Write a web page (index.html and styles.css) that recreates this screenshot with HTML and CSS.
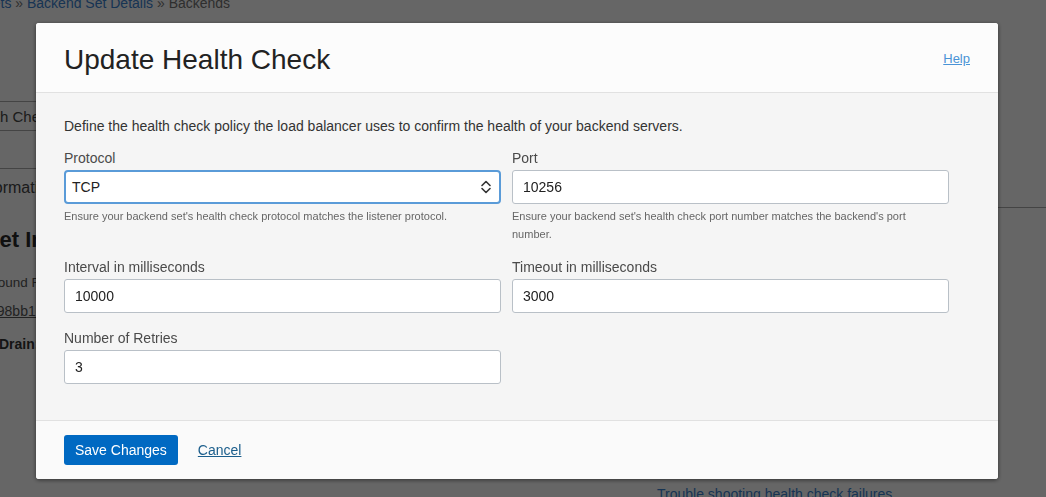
FILE: index.html
```html
<!DOCTYPE html>
<html lang="en">
<head>
<meta charset="utf-8">
<title>Update Health Check</title>
<link rel="stylesheet" href="styles.css">
</head>
<body>
<div class="page">
  <div class="crumbs"><a class="crumb-link crumb-first">Backend Sets</a> <span class="sep">»</span> <a class="crumb-link">Backend Set Details</a> <span class="sep">»</span> <span class="crumb-current">Backends</span></div>
  <div class="main">
    <div class="left">
      <div class="toolbar"><button class="tool-btn">Health Check</button></div>
      <div class="tabs"></div>
      <div class="tab-title">Information</div>
      <h2 class="section-title">Backend Set Information</h2>
      <div class="info-line">Round Robin</div>
      <div class="info-link">a98bb1e7c2</div>
      <div class="info-bold">Drain: No</div>
    </div>
    <div class="right">
      <div class="right-card"></div>
      <a class="trouble">Trouble shooting health check failures</a>
    </div>
  </div>
</div>

<div class="overlay"></div>

<div class="modal" role="dialog">
  <div class="modal-header">
    <h1 class="modal-title">Update Health Check</h1>
    <a class="help-link">Help</a>
  </div>
  <div class="modal-body">
    <p class="intro">Define the health check policy the load balancer uses to confirm the health of your backend servers.</p>
    <div class="form-grid">
      <div class="field">
        <label class="field-label">Protocol</label>
        <div class="select focused">
          <span class="select-value">TCP</span>
          <svg class="chevrons" width="12" height="16" viewBox="0 0 12 16"><path d="M2 6.5 L6 2.5 L10 6.5" fill="none" stroke="#333" stroke-width="1.6" stroke-linecap="round" stroke-linejoin="round"/><path d="M2 9.5 L6 13.5 L10 9.5" fill="none" stroke="#333" stroke-width="1.6" stroke-linecap="round" stroke-linejoin="round"/></svg>
        </div>
        <div class="help-text">Ensure your backend set's health check protocol matches the listener protocol.</div>
      </div>
      <div class="field">
        <label class="field-label">Port</label>
        <div class="input">10256</div>
        <div class="help-text">Ensure your backend set's health check port number matches the backend's port number.</div>
      </div>
      <div class="field">
        <label class="field-label">Interval in milliseconds</label>
        <div class="input">10000</div>
      </div>
      <div class="field">
        <label class="field-label">Timeout in milliseconds</label>
        <div class="input">3000</div>
      </div>
      <div class="field">
        <label class="field-label">Number of Retries</label>
        <div class="input">3</div>
      </div>
    </div>
  </div>
  <div class="modal-footer">
    <button class="btn-primary">Save Changes</button>
    <a class="cancel-link">Cancel</a>
  </div>
</div>
</body>
</html>
```

FILE: styles.css
```css
html, body {
  margin: 0;
  padding: 0;
}
body {
  width: 1046px;
  height: 497px;
  overflow: hidden;
  background: #ffffff;
  font-family: "Liberation Sans", Arial, Helvetica, sans-serif;
  color: #444;
}

/* ---------- underlying page ---------- */
.page {
  width: 1046px;
}
.crumbs {
  font-size: 14px;
  line-height: 16px;
  margin-top: -5px;
  margin-left: -75px;
  white-space: nowrap;
  color: #777;
}
.crumb-link {
  color: #3b82d0;
}
.sep {
  color: #777;
}
.crumb-current {
  color: #737373;
}
.main {
  display: flex;
}
.left {
  width: 640px;
  flex: none;
}
.toolbar {
  margin-top: 90px;
}
.tool-btn {
  margin-left: -47px;
  height: 30px;
  padding: 0 12px;
  border: 1px solid #aaaaaa;
  border-left: none;
  border-right: none;
  background: #fff;
  font-family: inherit;
  font-size: 15px;
  color: #474747;
}
.tabs {
  margin-top: 37px;
  border-top: 1px solid #aaaaaa;
}
.tab-title {
  margin-top: 10px;
  margin-left: -24px;
  font-size: 16px;
  line-height: 18px;
  color: #444;
  white-space: nowrap;
}
.section-title {
  margin: 30px 0 0 -113px;
  font-size: 22px;
  line-height: 26px;
  font-weight: bold;
  color: #2a2a2a;
  white-space: nowrap;
}
.info-line {
  margin: 21px 0 0 -12px;
  font-size: 13.5px;
  line-height: 18px;
  color: #555;
  white-space: nowrap;
}
.info-link {
  margin: 10px 0 0 -11px;
  font-size: 14px;
  line-height: 18px;
  color: #555;
  text-decoration: underline;
  white-space: nowrap;
}
.info-bold {
  margin: 15px 0 0 -1px;
  font-size: 14px;
  line-height: 18px;
  font-weight: bold;
  color: #333;
  white-space: nowrap;
}
.right {
  flex: 1;
  padding-left: 17px;
}
.right-card {
  margin: 196px 0 0 -17px;
  height: 278px;
  border-top: 1px solid #aaaaaa;
}
.trouble {
  display: block;
  font-size: 14px;
  line-height: 16px;
  color: #3b82d0;
  white-space: nowrap;
}

/* ---------- overlay + modal ---------- */
.overlay {
  position: fixed;
  inset: 0;
  background: rgba(0, 0, 0, 0.6);
}
.modal {
  position: fixed;
  left: 36px;
  top: 23px;
  width: 962px;
  height: 456px;
  box-sizing: border-box;
  display: flex;
  flex-direction: column;
  background: #fafafa;
  border-radius: 3px;
  box-shadow: 0 1px 4px rgba(0, 0, 0, 0.55);
  overflow: hidden;
}
.modal-header {
  height: 70px;
  flex: none;
  box-sizing: border-box;
  display: flex;
  align-items: center;
  justify-content: space-between;
  padding: 0 28px;
  background: #fcfcfc;
  border-bottom: 1px solid #e1e1e1;
}
.modal-title {
  margin: 0;
  font-size: 28px;
  line-height: 32px;
  font-weight: normal;
  color: #222;
  padding-top: 4px;
}
.help-link {
  font-size: 13px;
  line-height: 16px;
  color: #4a93d6;
  text-decoration: underline;
  padding-top: 2px;
}
.modal-body {
  flex: 1;
  background: #f5f5f5;
  padding: 23px 28px 0 28px;
  border-bottom: 1px solid #e1e1e1;
}
.intro {
  margin: 0 0 12px 0;
  font-size: 14px;
  line-height: 20px;
  color: #333;
}
.form-grid {
  display: grid;
  grid-template-columns: 437px 437px;
  column-gap: 11px;
  align-items: start;
}
.field {
  margin-bottom: 15px;
}
.field-label {
  display: block;
  font-size: 14px;
  line-height: 20px;
  color: #4a4a4a;
  margin-bottom: 2px;
}
.input,
.select {
  box-sizing: border-box;
  height: 34px;
  background: #ffffff;
  border: 1px solid #b9c0c7;
  border-radius: 3px;
  font-size: 14px;
  color: #222;
  display: flex;
  align-items: center;
  padding: 0 10px;
}
.select.focused {
  border: 2px solid #5a9bd8;
  border-radius: 4px;
  padding: 0 7px 0 6px;
  justify-content: space-between;
}
.select-value {
  line-height: 20px;
}
.chevrons {
  display: block;
}
.help-text {
  margin-top: 3px;
  margin-bottom: -1px;
  max-width: 400px;
  font-size: 11px;
  line-height: 18px;
  color: #666;
}
.modal-footer {
  height: 58px;
  flex: none;
  box-sizing: border-box;
  display: flex;
  align-items: center;
  gap: 20px;
  padding: 0 28px;
  background: #fafafa;
}
.btn-primary {
  height: 30px;
  padding: 0 11px;
  border: none;
  border-radius: 3px;
  background: #0069c2;
  color: #ffffff;
  font-family: inherit;
  font-size: 14px;
}
.cancel-link {
  font-size: 14px;
  color: #1b5e8c;
  text-decoration: underline;
}
```
